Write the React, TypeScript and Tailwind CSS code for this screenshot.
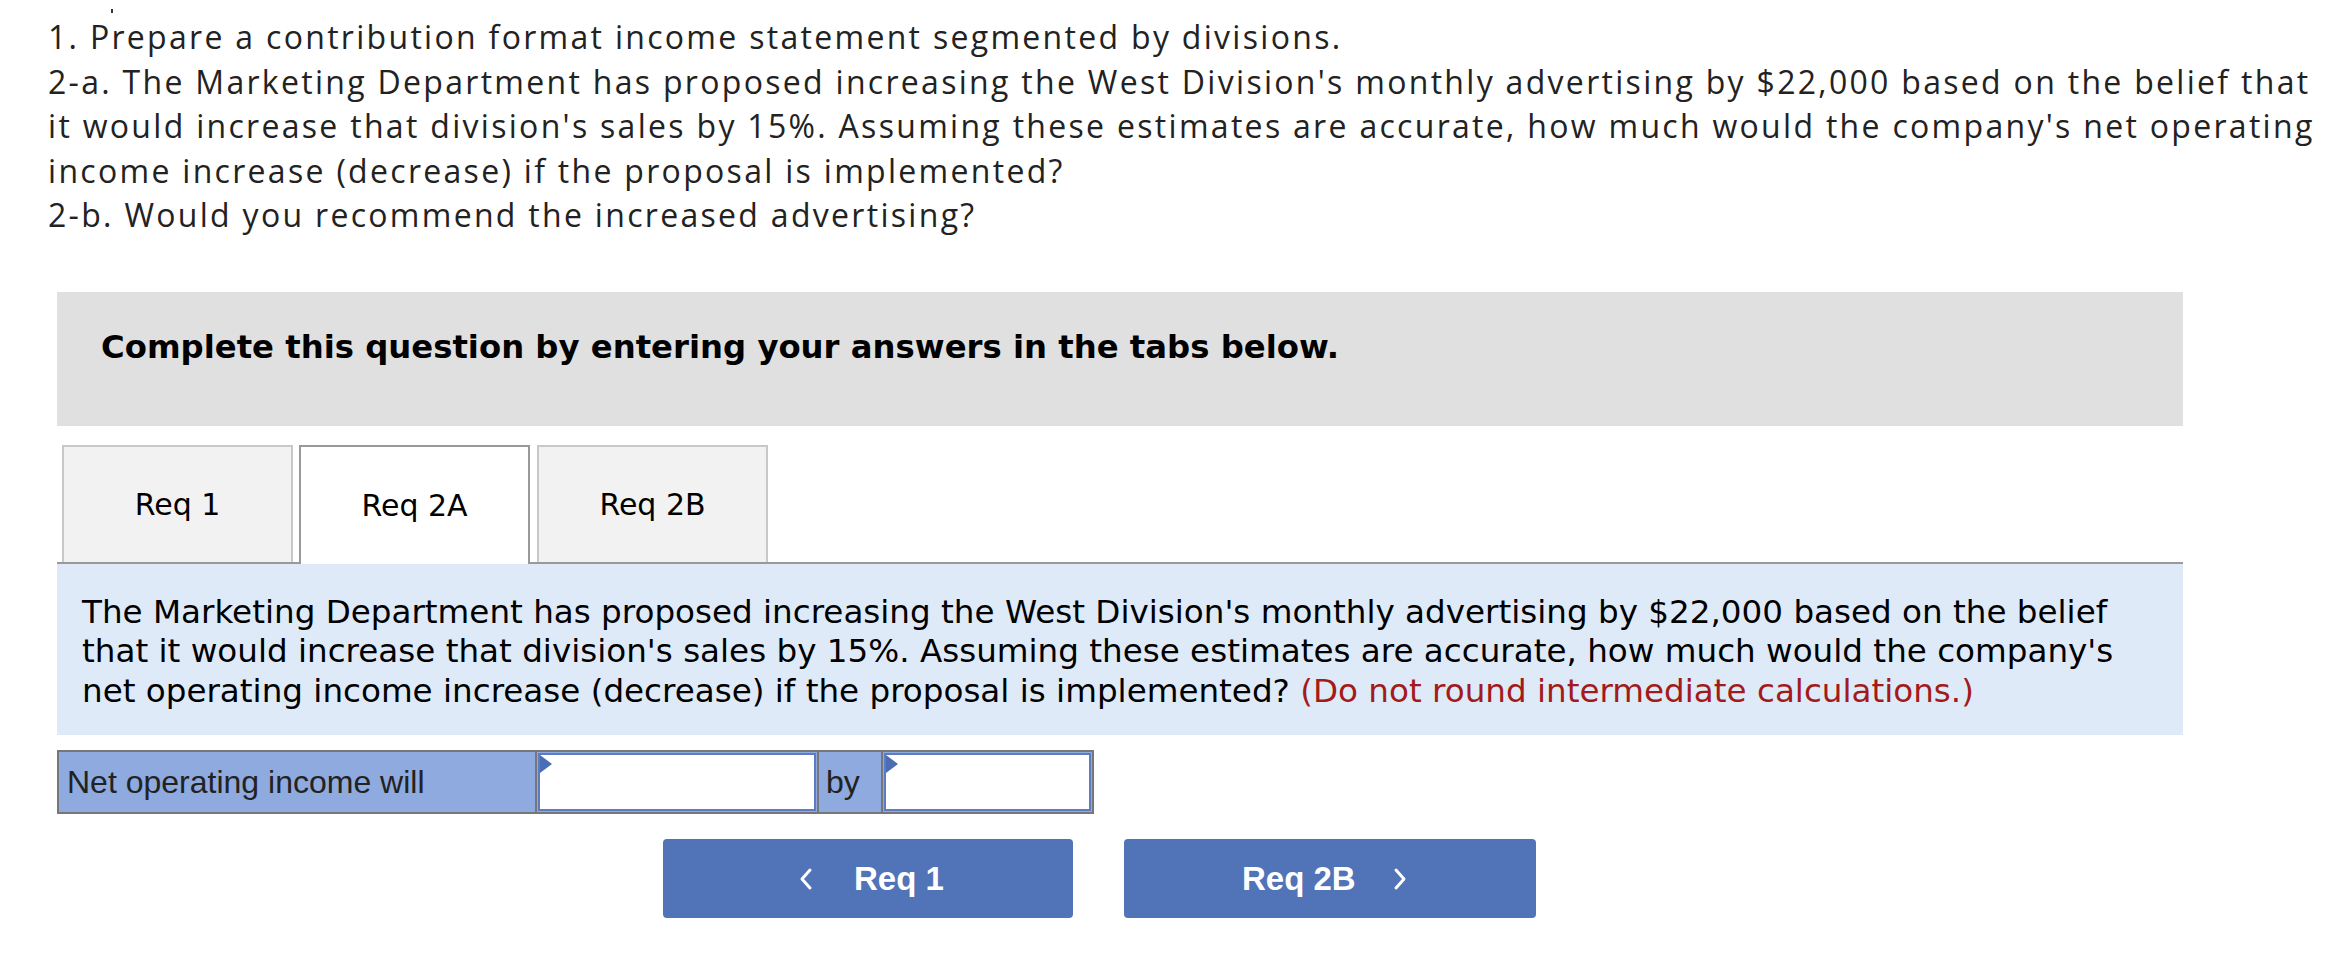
import type { FC } from 'react'

const TABS = ['Req 1', 'Req 2A', 'Req 2B']

const Chevron: FC<{ dir: 'left' | 'right' }> = ({ dir }) => (
  <svg width="14" height="24" viewBox="0 0 14 24" fill="none">
    <polyline
      points={dir === 'left' ? '11,3 3,12 11,21' : '3,3 11,12 3,21'}
      stroke="white"
      strokeWidth="3"
      strokeLinecap="round"
      strokeLinejoin="round"
    />
  </svg>
)

const AnswerInput: FC<{ width: string }> = ({ width }) => (
  <div className={`relative h-full bg-[#8eaadf] p-[1px] ${width}`}>
    <div className="h-full w-full border-2 border-[#5b7cc2] bg-white" />
    <div className="absolute left-[3px] top-[3px] h-0 w-0 border-y-[9px] border-l-[12px] border-y-transparent border-l-[#4a6db5]" />
  </div>
)

export default function App() {
  return (
    <div className="relative h-[965px] w-[2340px] overflow-hidden bg-white">
      <div className="absolute left-[111px] top-[9px] h-[4px] w-[2px] bg-[#333]" />

      <div className="whitespace-nowrap pl-[48px] pt-[15px] font-['Open_Sans',sans-serif] text-[32px] leading-[44.5px] tracking-[2.3px] text-[#222]">
        1. Prepare a contribution format income statement segmented by divisions.
        <br />
        2-a. The Marketing Department has proposed increasing the West Division's monthly advertising by $22,000 based on the belief that
        <br />
        it would increase that division's sales by 15%. Assuming these estimates are accurate, how much would the company's net operating
        <br />
        income increase (decrease) if the proposal is implemented?
        <br />
        2-b. Would you recommend the increased advertising?
      </div>

      <div className="ml-[57px] mt-[54px] w-[2126px] font-['DejaVu_Sans',sans-serif]">
        <div className="h-[134px] bg-[#e0e0e0] pl-[44px] pt-[31px] text-[32.3px] leading-[48px] font-bold text-black">
          Complete this question by entering your answers in the tabs below.
        </div>

        <div className="mt-[19px] flex border-b-2 border-[#999] pl-[5px]">
          {TABS.map((tab, i) => {
            const active = i === 1
            return (
              <div
                key={tab}
                className={
                  active
                    ? 'relative -mb-[2px] ml-[6px] mr-[7px] flex h-[119px] w-[231px] items-center justify-center border-2 border-b-0 border-[#999] bg-white text-[30px] text-black'
                    : 'flex h-[117px] w-[231px] items-center justify-center border-2 border-b-0 border-[#c8c8c8] bg-[#f2f2f2] text-[30px] text-black'
                }
              >
                {tab}
              </div>
            )
          })}
        </div>

        <div className="whitespace-nowrap bg-[#dfeaf8] pl-[25px] pt-[29px] pb-[24px] text-[32.6px] leading-[39.5px] text-black">
          The Marketing Department has proposed increasing the West Division's monthly advertising by $22,000 based on the belief
          <br />
          that it would increase that division's sales by 15%. Assuming these estimates are accurate, how much would the company's
          <br />
          net operating income increase (decrease) if the proposal is implemented?{' '}
          <span className="text-[#a31a1a]">(Do not round intermediate calculations.)</span>
        </div>
      </div>

      <div className="ml-[57px] mt-[15px] flex h-[64px] w-[1037px] border-2 border-[#777] font-['Liberation_Sans',Arial,sans-serif] text-[32px] text-[#222]">
        <div className="flex w-[476px] items-center bg-[#8eaadf] pl-[8px]">Net operating income will</div>
        <div className="border-l-2 border-[#777]" />
        <AnswerInput width="w-[280px]" />
        <div className="border-l-2 border-[#777]" />
        <div className="flex w-[62px] items-center bg-[#8eaadf] pl-[7px]">by</div>
        <div className="border-l-2 border-[#777]" />
        <AnswerInput width="flex-1" />
      </div>

      <div className="mt-[25px] flex gap-[51px] pl-[663px] font-['Liberation_Sans',Arial,sans-serif] text-[33px] font-bold text-white">
        <button className="flex h-[79px] w-[410px] items-center gap-[41px] rounded-[4px] bg-[#5173b7] pl-[136px]">
          <Chevron dir="left" />
          <span>Req 1</span>
        </button>
        <button className="flex h-[79px] w-[412px] items-center gap-[37px] rounded-[4px] bg-[#5173b7] pl-[118px]">
          <span>Req 2B</span>
          <Chevron dir="right" />
        </button>
      </div>
    </div>
  )
}
